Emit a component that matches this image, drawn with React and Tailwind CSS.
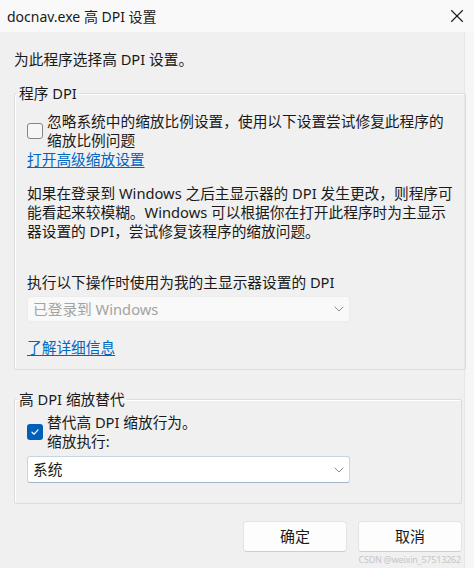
import React from "react";

const font = { fontFamily: '"Noto Sans", "Noto Sans CJK SC", sans-serif' };

function Chevron() {
  return (
    <svg width="10" height="6" viewBox="0 0 10 6" fill="none" stroke="#8a8a8a" strokeWidth="1" strokeLinecap="round" strokeLinejoin="round">
      <polyline points="1 1 5 5 9 1" />
    </svg>
  );
}

function Checkbox({ checked }) {
  if (checked) {
    return (
      <span className="flex h-4 w-4 shrink-0 items-center justify-center rounded-[3px] bg-[#005fb8]">
        <svg width="10" height="10" viewBox="0 0 10 10" fill="none" stroke="#ffffff" strokeWidth="1.2" strokeLinecap="round" strokeLinejoin="round">
          <polyline points="2 5.2 4.2 7.2 8 2.8" />
        </svg>
      </span>
    );
  }
  return <span className="h-4 w-4 shrink-0 rounded-[3px] border border-[#858585] bg-[#f6f6f6]" />;
}

function Group({ title, className, children }) {
  return (
    <fieldset className={`w-[448px] rounded-[2px] border border-[#dcdcdc] px-3 shadow-[inset_1px_1px_0_#ffffff] ${className}`}>
      <legend className="-ml-[10px] px-[2px] text-[14.7px] leading-[19px] text-[#1a1a1a]">{title}</legend>
      {children}
    </fieldset>
  );
}

export default function App() {
  return (
    <div className="flex h-[568px] w-[474px] flex-col bg-[#f6f6f6] text-[#1a1a1a]" style={font}>
      <div className="flex h-[32px] shrink-0 items-center justify-between bg-[#f9f9f9] pl-[7px] pr-[11px]">
        <span className="text-[14px] leading-[19px]">docnav.exe 高 DPI 设置</span>
        <svg width="12" height="12" viewBox="0 0 12 12" fill="none" stroke="#1a1a1a" strokeWidth="1.1" strokeLinecap="round">
          <line x1="0.5" y1="0.5" x2="11.5" y2="11.5" />
          <line x1="11.5" y1="0.5" x2="0.5" y2="11.5" />
        </svg>
      </div>

      <div className="flex flex-1">
        <div className="relative flex w-[465px] flex-col border-r border-[#e6e6e6] bg-[#f0f0f0] pl-[14px]">
          <p className="mt-[18px] text-[14.7px] leading-[19px]">为此程序选择高 DPI 设置。</p>

          <Group title="程序 DPI" className="mt-[15px] pb-[12px]">
            <div className="mt-[9px] flex items-center gap-1">
              <Checkbox checked={false} />
              <span className="whitespace-nowrap text-[14.7px] leading-[19px]">
                忽略系统中的缩放比例设置，使用以下设置尝试修复此程序的
                <br />
                缩放比例问题
              </span>
            </div>
            <a className="block w-fit text-[14.7px] leading-[19px] text-[#0067c0] underline underline-offset-2">打开高级缩放设置</a>

            <p className="mt-[15px] whitespace-nowrap text-[14.7px] leading-[19px]">
              如果在登录到 Windows 之后主显示器的 DPI 发生更改，则程序可
              <br />
              能看起来较模糊。Windows 可以根据你在打开此程序时为主显示
              <br />
              器设置的 DPI，尝试修复该程序的缩放问题。
            </p>

            <p className="mt-[32px] whitespace-nowrap text-[14.7px] leading-[19px]">执行以下操作时使用为我的主显示器设置的 DPI</p>
            <div className="mt-[4px] flex h-[26px] w-[323px] items-center justify-between rounded-[3px] border border-[#ececec] bg-[#f9f9f9] pl-[5px] pr-[5px]">
              <span className="text-[14.7px] leading-[19px] text-[#a3a3a3]">已登录到 Windows</span>
              <Chevron />
            </div>

            <a className="mt-[16px] block w-fit text-[14.7px] leading-[19px] text-[#0067c0] underline underline-offset-2">了解详细信息</a>
          </Group>

          <Group title="高 DPI 缩放替代" className="mt-[20px] pb-[20px]">
            <div className="mt-[4px] flex items-center gap-1">
              <Checkbox checked />
              <span className="whitespace-nowrap text-[14.7px] leading-[19px]">
                替代高 DPI 缩放行为。
                <br />
                缩放执行:
              </span>
            </div>
            <div className="mt-[5px] flex h-[27px] w-[323px] items-center justify-between rounded-[3px] border border-[#c6d5e4] border-b-[#9fb6cc] bg-white pl-[5px] pr-[5px]">
              <span className="text-[14.7px] leading-[19px]">系统</span>
              <Chevron />
            </div>
          </Group>

          <div className="mt-[17px] flex w-[448px] justify-end gap-[11px]">
            <button className="h-[31px] w-[104px] rounded-[4px] border border-[#e3e3e3] border-b-[#cfcfcf] bg-[#fdfdfd] text-[15px] leading-[19px]">确定</button>
            <button className="h-[31px] w-[104px] rounded-[4px] border border-[#e3e3e3] border-b-[#cfcfcf] bg-[#fdfdfd] text-[15px] leading-[19px]">取消</button>
          </div>

          <span className="absolute bottom-[3px] right-[3px] text-[9px] leading-[11px] tracking-[-0.2px] text-[#c6c6c6]">CSDN @weixin_57513262</span>
        </div>
        <div className="flex-1" />
      </div>
    </div>
  );
}
